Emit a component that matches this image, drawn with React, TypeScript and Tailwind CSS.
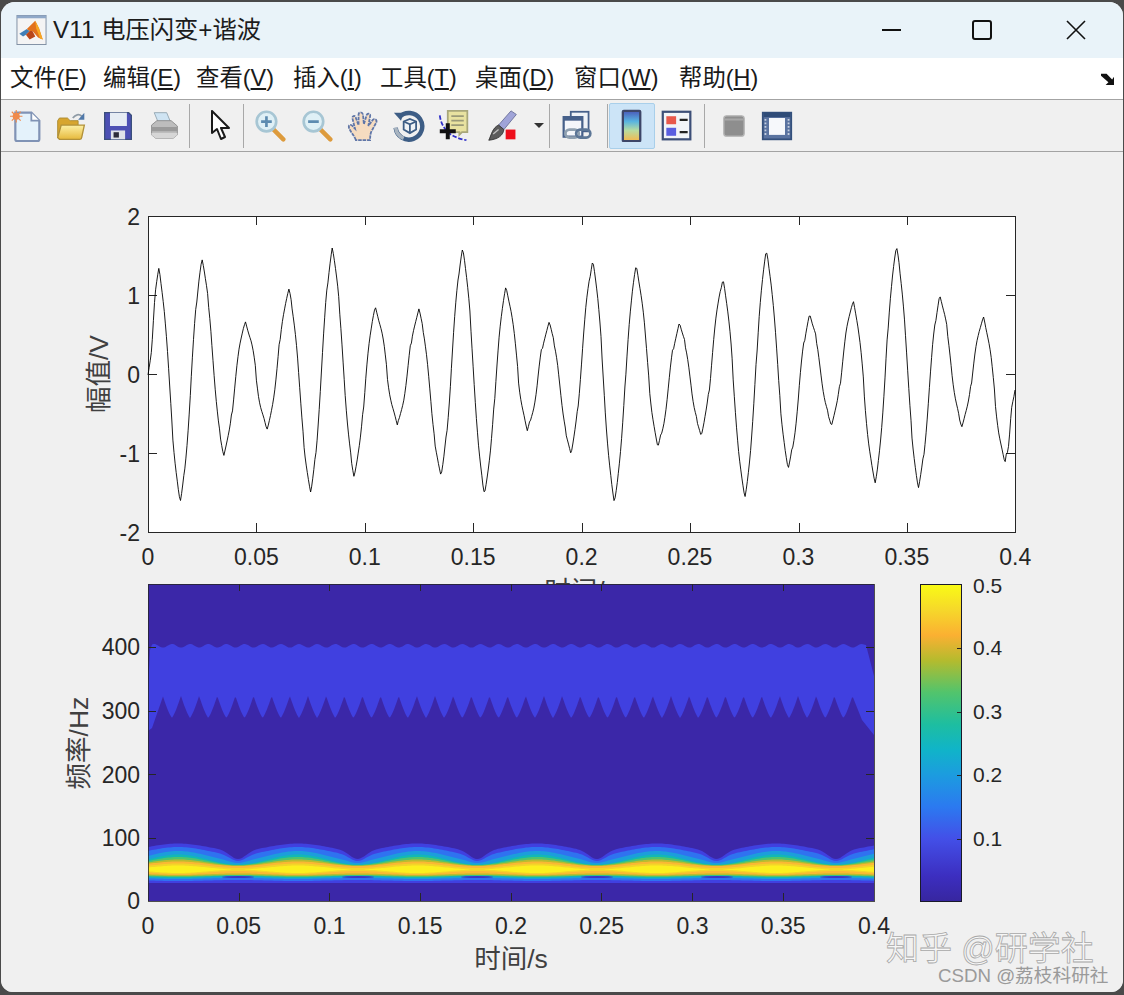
import React from 'react';

const SANS = { fontFamily: '"Liberation Sans", "Noto Sans CJK SC", sans-serif' };

// peaks and troughs of the top trace, page pixels
const EXTREMA: [number, number][] = [
  [148, 375], [158.7, 267.7], [180.3, 501.7], [202, 259], [223.7, 456], [245.3, 321], [267, 430],
  [289, 288.7], [310.7, 492.7], [332.3, 247.7], [354, 476.7], [375.3, 306.7], [397.3, 425],
  [419, 308.7], [441, 475.7], [462.6, 248.3], [484.4, 494], [505.9, 286.7], [527.3, 430.7],
  [549.2, 321.7], [571, 454], [592.8, 260.7], [614.3, 502], [636.1, 265.7], [657.9, 447.3],
  [679.4, 322.7], [701.2, 436], [723, 279.3], [744.9, 497.7], [766.3, 250.7], [788.2, 468.7],
  [809.6, 314], [831.4, 426], [853.3, 300.7], [875.1, 483.3], [896.5, 246.7], [918.4, 488.3],
  [939.8, 295.3], [961.7, 427.3], [983.5, 316.7], [1005, 463.3], [1015, 390],
];

const tracePoints = () => {
  const pts: string[] = [];
  let seg = 0;
  for (let i = 0; i <= 800; i++) {
    const x = 148 + (i * 867) / 800;
    while (seg < EXTREMA.length - 2 && x > EXTREMA[seg + 1][0]) seg++;
    const [x0, y0] = EXTREMA[seg];
    const [x1, y1] = EXTREMA[seg + 1];
    const s = Math.min(1, (x - x0) / (x1 - x0));
    const ease = 0.3 * s + (0.7 * (1 - Math.cos(Math.PI * s))) / 2;
    const base = y0 + (y1 - y0) * ease;
    const ripple = 3 * Math.sin(4 * Math.PI * s) * (y1 > y0 ? 1 : -1);
    const noise = (((i * 7919) % 11) - 5) * 0.55 * Math.sin(Math.PI * s);
    pts.push(`${x.toFixed(1)},${(base + ripple + noise).toFixed(1)}`);
  }
  return pts.join(' ');
};

// the bright 50 Hz band repeats between these notches
const notchDist = (x: number) => {
  const k = Math.round((x - 238) / 119.6);
  return Math.abs(x - (238 + k * 119.6));
};

// colour, top at bump, top at notch, bottom at bump, bottom at notch, notch sharpness
const LEVELS: [string, number, number, number, number, number][] = [
  ['#4040e0', 843.5, 859, 883, 883, 0.55],
  ['#2f72f0', 847, 861, 881, 880, 0.45],
  ['#1c9edb', 851, 863, 879, 878, 0.2],
  ['#12b8b4', 854.5, 864.5, 878, 876.5, 0],
  ['#4fc46e', 857, 865, 877, 875.5, 0],
  ['#b9bc2e', 859.5, 865.5, 876, 875, 0],
  ['#fab834', 861.5, 866, 875, 873.5, 0],
  ['#f4d428', 863.5, 868, 874, 871, 0],
  ['#fbf01e', 865.5, 869.5, 873, 869.5, 0],
];

const bandPoints = (t0: number, t1: number, b0: number, b1: number, sharpness: number) => {
  const top: string[] = [];
  const bottom: string[] = [];
  for (let x = 148; x <= 874; x += 2) {
    const d = notchDist(x);
    const g = Math.sin((Math.PI / 2) * Math.min(1, d / 60));
    const sharp = 1 - Math.exp(-((d / 11) ** 2));
    const h = sharpness * sharp + (1 - sharpness) * g * g;
    top.push(`${x},${(t1 + (t0 - t1) * h).toFixed(1)}`);
    bottom.unshift(`${x},${(b1 + (b0 - b1) * g * g).toFixed(1)}`);
  }
  return [...top, ...bottom].join(' ');
};

// lighter 300-400 Hz band with its scalloped top and toothed bottom
const purpleBand = () => {
  const top: string[] = [];
  const bottom: string[] = [];
  for (let x = 152; x <= 864; x += 1.5) {
    top.push(`${x},${(645.8 - 1.8 * Math.cos(((x - 172) / 18.15) * 2 * Math.PI)).toFixed(1)}`);
  }
  for (let x = 853; x >= 163; x -= 1) {
    const f = (((x - 162.8) / 18.15) % 1 + 1) % 1;
    const tri = 1 - Math.abs(f - 0.5) * 2;
    const y = 696 + 22 * (0.6 * tri + 0.4 * Math.sin(Math.PI * f));
    bottom.push(`${x},${y.toFixed(1)}`);
  }
  return ['148,731', '148,690', '150,650', ...top, '866,645', '874,676', '874,735', '862,720', ...bottom, '152,728'].join(' ');
};

const XT1 = ['0', '0.05', '0.1', '0.15', '0.2', '0.25', '0.3', '0.35', '0.4'];
const YT1: [string, number][] = [['2', 216], ['1', 295], ['0', 374], ['-1', 453], ['-2', 532]];
const YT2: [string, number][] = [['400', 647], ['300', 711], ['200', 774.5], ['100', 838], ['0', 901]];
const CBT: [string, number][] = [['0.5', 586], ['0.4', 648], ['0.3', 712], ['0.2', 775], ['0.1', 839]];

const Figure = () => {
  const axisText = 'fill-[#262626] text-[23px]';
  const labelText = 'fill-[#404040] text-[26.5px]';
  return (
    <svg viewBox="1 152 1122 840" width={1122} height={840} className="block bg-[#f0f0f0]" style={SANS}>
      <defs>
        <linearGradient id="parula" x1="0" y1="1" x2="0" y2="0">
          <stop offset="0" stopColor="#37269f" />
          <stop offset="0.08" stopColor="#3c2ec0" />
          <stop offset="0.2" stopColor="#4350e8" />
          <stop offset="0.3" stopColor="#2b7af0" />
          <stop offset="0.4" stopColor="#1c9cdf" />
          <stop offset="0.48" stopColor="#10b4c8" />
          <stop offset="0.56" stopColor="#1ebea0" />
          <stop offset="0.66" stopColor="#52c46c" />
          <stop offset="0.76" stopColor="#b4bb2e" />
          <stop offset="0.84" stopColor="#fbb032" />
          <stop offset="0.92" stopColor="#f6d82a" />
          <stop offset="1" stopColor="#f9fb15" />
        </linearGradient>
        <clipPath id="lowerClip">
          <rect x="148" y="584" width="726" height="317" />
        </clipPath>
      </defs>

      {/* top axes */}
      <rect x="148.5" y="216.5" width="867" height="316" fill="#fff" stroke="#262626" />
      {[256, 365, 473, 582, 690, 799, 907].map((x) => (
        <path key={x} d={`M${x + 0.5} 216V225M${x + 0.5} 532V523`} stroke="#262626" />
      ))}
      {[295, 374, 453].map((y) => (
        <path key={y} d={`M148 ${y + 0.5}H157M1015 ${y + 0.5}H1006`} stroke="#262626" />
      ))}
      <polyline points={tracePoints()} fill="none" stroke="#000" strokeWidth="0.9" />
      {XT1.map((t, i) => (
        <text key={t} x={148 + i * 108.4} y={565} textAnchor="middle" className={axisText}>{t}</text>
      ))}
      {YT1.map(([t, y]) => (
        <text key={t} x={140} y={y + 9} textAnchor="end" className={axisText}>{t}</text>
      ))}
      <text transform="translate(108 374) rotate(-90)" textAnchor="middle" className={labelText}>幅值/V</text>
      <text x={581} y={600} textAnchor="middle" className={labelText}>时间/s</text>

      {/* lower axes, contour levels painted from the outside in */}
      <rect x="148" y="584" width="726" height="317" fill="#3b27a8" />
      <g clipPath="url(#lowerClip)">
        <polygon points={purpleBand()} fill="#4040e0" />
        {LEVELS.map(([c, t0, t1, b0, b1, sharp]) => (
          <polygon key={c} points={bandPoints(t0, t1, b0, b1, sharp)} fill={c} />
        ))}
        {[238, 358, 477, 597, 717, 836].map((x) => (
          <ellipse key={x} cx={x} cy={877} rx={16} ry={1} fill="#3a34c8" />
        ))}
      </g>
      <rect x="148.5" y="584.5" width="726" height="317" fill="none" stroke="#262626" strokeOpacity="0.8" />
      {[239, 329, 420, 511, 601, 692, 783].map((x) => (
        <path key={x} d={`M${x + 0.5} 584V591M${x + 0.5} 901V893`} stroke="#262626" />
      ))}
      {[647, 711, 774, 838].map((y) => (
        <path key={y} d={`M148 ${y + 0.5}H156M874 ${y + 0.5}H866`} stroke="#262626" />
      ))}
      {XT1.map((t, i) => (
        <text key={t} x={148 + i * 90.75} y={934} textAnchor="middle" className={axisText}>{t}</text>
      ))}
      {YT2.map(([t, y]) => (
        <text key={t} x={140} y={y + 8} textAnchor="end" className={axisText}>{t}</text>
      ))}
      <text transform="translate(88 743) rotate(-90)" textAnchor="middle" className={labelText}>频率/Hz</text>
      <text x={511} y={968} textAnchor="middle" className={labelText}>时间/s</text>

      {/* colorbar */}
      <rect x="920.5" y="584.5" width="41" height="317" fill="url(#parula)" stroke="#1a1a2a" />
      {[648, 712, 775, 839].map((y) => (
        <path key={y} d={`M961 ${y + 0.5}H957`} stroke="#262626" />
      ))}
      {CBT.map(([t, y]) => (
        <text key={t} x={973} y={y + 7} className="fill-[#262626] text-[21px]">{t}</text>
      ))}

      {/* watermarks */}
      <text x={886} y={960} stroke="#a8a8a8" strokeWidth="0.8" fill="#f6f6f6" className="text-[33px]">知乎 @研学社</text>
      <text x={938} y={982} fill="#9a9a9a" className="text-[18.7px]">CSDN @荔枝科研社</text>
    </svg>
  );
};

const MatlabLogo = () => (
  <svg viewBox="0 0 32 32" width={31} height={30}>
    <rect x="0.5" y="0.5" width="31" height="31" fill="#f4f4f4" stroke="#7d8ca0" />
    <rect x="0.5" y="0.5" width="31" height="3" fill="#8fa8c8" />
    <path d="M3 20L11 15L14 17L10 21L7 23Z" fill="#3f7fb8" />
    <path d="M11 15L20 6L24 14L28 26L23 24L17 17L14 17Z" fill="#e2711d" />
    <path d="M20 6L24 14L28 26L25 25L21 14Z" fill="#f5a623" />
    <path d="M14 17L17 17L20 23L14 26L10 21Z" fill="#b8461a" />
  </svg>
);

const IconNew = () => (
  <svg viewBox="0 0 36 36" width={32} height={32}>
    <path d="M6 3H24L33 12V33A2 2 0 0 1 31 35H8A2 2 0 0 1 6 33Z" fill="#e4f2fb" stroke="#8093b5" strokeWidth="2.5" />
    <path d="M24 3V12H33" fill="#fff" stroke="#8093b5" strokeWidth="2" />
    <circle cx="7" cy="7" r="4" fill="#f08a4b" />
    <path d="M7 0V14M0 7H14M2 2L12 12M12 2L2 12" stroke="#f08a4b" strokeWidth="1.3" />
  </svg>
);

const IconOpen = () => (
  <svg viewBox="0 0 36 36" width={32} height={32}>
    <defs>
      <linearGradient id="folder" x1="0" y1="0" x2="0" y2="1">
        <stop offset="0" stopColor="#fdf0a4" />
        <stop offset="1" stopColor="#e6b93c" />
      </linearGradient>
    </defs>
    <path d="M3 12L5 9H14L17 12H26V32H6A3 3 0 0 1 3 29Z" fill="#d7a52f" stroke="#a9882d" />
    <path d="M3 31L7 17H33L30 31A2 2 0 0 1 28 33H5Z" fill="url(#folder)" stroke="#b1913a" strokeWidth="1.5" />
    <path d="M20 9C23 5 27 4 30 7" fill="none" stroke="#8f9ba6" strokeWidth="2" />
    <path d="M33 3V11H26Z" fill="#5078a8" />
  </svg>
);

const IconSave = () => (
  <svg viewBox="0 0 36 36" width={32} height={32}>
    <path d="M3 3H30L33 6V33H3Z" fill="#4c50b4" stroke="#3b4f7c" strokeWidth="1.5" />
    <rect x="9" y="3" width="19" height="15" fill="#e6ecf4" />
    <rect x="10" y="23" width="16" height="10" fill="#dfe3ea" />
    <rect x="13" y="25" width="6" height="6" fill="#2c2c3a" />
  </svg>
);

const IconPrint = () => (
  <svg viewBox="0 0 36 36" width={32} height={32}>
    <path d="M7 3H21L26 15H12Z" fill="#cfe4f3" stroke="#90a4b0" />
    <path d="M4 17L10 12H26L33 18V28L28 32H9L4 28Z" fill="#bdbdbd" stroke="#8a8a8a" />
    <path d="M4 19H33V24H4Z" fill="#9a9a9a" />
    <path d="M4 26H33V28L28 32H9L4 28Z" fill="#d6d6d6" />
  </svg>
);

const IconArrow = () => (
  <svg viewBox="0 0 22 32" width={22} height={32}>
    <path d="M2 1L2 23L7 19L11 29L15 27L11 18L19 18Z" fill="#fff" stroke="#1a1a1a" strokeWidth="2" strokeLinejoin="round" />
  </svg>
);

const IconZoom = ({ plus }: { plus: boolean }) => (
  <svg viewBox="0 0 36 36" width={32} height={32}>
    <path d="M21 21L33 33" stroke="#dd9b3d" strokeWidth="5" strokeLinecap="round" />
    <circle cx="14" cy="13" r="11" fill="#dff0f6" stroke="#a7c6d4" strokeWidth="3" />
    <path d={plus ? 'M8 13H20M14 7V19' : 'M8 13H20'} stroke="#5d8bb0" strokeWidth="3" />
  </svg>
);

const IconHand = () => (
  <svg viewBox="0 0 36 36" width={32} height={32}>
    <path
      d="M10 34C8 28 3 24 2 19C2 16 5 16 7 19L9 21L6 9C6 6 10 6 10 9L13 17L13 5C13 2 17 2 18 5L19 16L22 6C23 3 27 4 26 7L24 18L29 11C31 9 34 11 33 14L27 25C26 29 26 31 26 34Z"
      fill="#f6dcc0"
      stroke="#5f76a8"
      strokeWidth="2"
      strokeDasharray="4 1"
    />
  </svg>
);

const IconRotate = () => (
  <svg viewBox="0 0 36 36" width={32} height={32}>
    <path d="M7 8A15 15 0 1 1 3 20" fill="none" stroke="#3d5d85" strokeWidth="5" />
    <path d="M1 3L12 3L9 12Z" fill="#3d5d85" />
    <path d="M3 20A15 15 0 0 0 12 32" fill="none" stroke="#a8b4c0" strokeWidth="4" />
    <path d="M12 13L19 10L26 13V22L19 26L12 22Z" fill="#eef2f6" stroke="#3d5d85" strokeWidth="2" />
    <path d="M12 13L19 16L26 13M19 16V26" fill="none" stroke="#3d5d85" strokeWidth="2" />
  </svg>
);

const IconCursor = () => (
  <svg viewBox="0 0 36 36" width={32} height={32}>
    <path d="M11 1H33V25H27L24 28V25H11Z" fill="#e8e2a0" stroke="#a8a77a" strokeWidth="2" />
    <path d="M15 7H29M15 12H29M15 17H29" stroke="#9a9a78" strokeWidth="2" />
    <path d="M2 6C3 14 6 19 10 24C15 29 22 32 32 34" fill="none" stroke="#3030c8" strokeWidth="2" strokeDasharray="5 2" />
    <path d="M11 15V33M2 24H20" stroke="#111" strokeWidth="4.5" />
  </svg>
);

const IconBrush = () => (
  <svg viewBox="0 0 36 36" width={32} height={32}>
    <path d="M27 1L33 5L19 22L13 17Z" fill="#a0a4d8" stroke="#6a7098" />
    <path d="M13 17L19 22C18 29 12 33 2 34C5 28 6 20 13 17Z" fill="#5c5c5c" stroke="#333" />
    <path d="M7 27L13 22" stroke="#c0c0c0" strokeWidth="1.5" />
    <rect x="21" y="22" width="11" height="11" fill="#ee0f1c" />
  </svg>
);

const IconLink = () => (
  <svg viewBox="0 0 36 36" width={32} height={32}>
    <rect x="11" y="2" width="20" height="22" fill="#eef2f7" stroke="#46608a" strokeWidth="2" />
    <rect x="3" y="8" width="21" height="22" fill="#f4f6fa" stroke="#46608a" strokeWidth="2.5" />
    <rect x="3" y="8" width="21" height="4" fill="#46608a" />
    <rect x="5" y="22" width="15" height="9" rx="4.5" fill="none" stroke="#8fa0b0" strokeWidth="3" />
    <rect x="17" y="22" width="16" height="9" rx="4.5" fill="none" stroke="#5c7696" strokeWidth="3" />
  </svg>
);

const IconColorbar = () => (
  <svg viewBox="0 0 24 36" width={22} height={33}>
    <defs>
      <linearGradient id="cbIcon" x1="0" y1="0" x2="0" y2="1">
        <stop offset="0" stopColor="#4a58b8" />
        <stop offset="0.35" stopColor="#58b4e0" />
        <stop offset="0.65" stopColor="#b8dca0" />
        <stop offset="1" stopColor="#f6b84c" />
      </linearGradient>
    </defs>
    <rect x="2" y="2" width="19" height="33" rx="1" fill="url(#cbIcon)" stroke="#3d4668" strokeWidth="2.5" />
  </svg>
);

const IconLegend = () => (
  <svg viewBox="0 0 36 36" width={32} height={32}>
    <rect x="2" y="2" width="31" height="31" fill="#f2f4f8" stroke="#3d4f78" strokeWidth="2.5" />
    <rect x="6" y="7" width="11" height="9" fill="#e8584c" />
    <rect x="6" y="20" width="11" height="9" fill="#5a5ee0" />
    <path d="M21 11H30M21 25H30" stroke="#222" strokeWidth="2.5" />
  </svg>
);

const IconGrey = () => (
  <svg viewBox="0 0 26 26" width={24} height={24}>
    <rect x="2" y="2" width="22" height="22" rx="3" fill="#8e8e8e" stroke="#b4b4b4" strokeWidth="1.5" />
    <path d="M3 6H23" stroke="#a8a8a8" strokeWidth="2" />
  </svg>
);

const IconFrame = () => (
  <svg viewBox="0 0 36 36" width={32} height={32}>
    <rect x="2" y="3" width="32" height="30" fill="#5a73a0" stroke="#34507c" strokeWidth="2" />
    <rect x="3" y="3" width="30" height="5" fill="#2f4c78" />
    <rect x="9" y="9" width="18" height="19" fill="#f6f8fb" />
    <path d="M5 10V28M31 10V28" stroke="#c5cfdf" strokeWidth="2" strokeDasharray="2 2" />
  </svg>
);

const Sep = ({ className }: { className: string }) => <div className={`w-px h-[44px] bg-[#a8a8a8] ${className}`} />;

const Toolbar = () => (
  <div className="flex items-center h-[53px] pl-[9px] bg-[#f0f0f0] border-y border-[#a3a3a3]">
    <IconNew />
    <div className="ml-[13px] flex"><IconOpen /></div>
    <div className="ml-[15px] flex"><IconSave /></div>
    <div className="ml-[14px] flex"><IconPrint /></div>
    <Sep className="ml-[9px]" />
    <div className="ml-[20px] flex"><IconArrow /></div>
    <Sep className="ml-[11px]" />
    <div className="ml-[10px] flex"><IconZoom plus /></div>
    <div className="ml-[15px] flex"><IconZoom plus={false} /></div>
    <div className="ml-[14px] flex"><IconHand /></div>
    <div className="ml-[14px] flex"><IconRotate /></div>
    <div className="ml-[13px] flex"><IconCursor /></div>
    <div className="ml-[17px] flex"><IconBrush /></div>
    <div className="ml-[15px] w-0 h-0 border-x-[5px] border-x-transparent border-t-[5px] border-t-[#333]" />
    <Sep className="ml-[5px]" />
    <div className="ml-[11px] flex"><IconLink /></div>
    <Sep className="ml-[14px]" />
    <div className="ml-px w-[46px] h-[46px] flex items-center justify-center bg-[#cce4f7] border border-[#a9cfea] rounded-[2px]"><IconColorbar /></div>
    <div className="ml-[6px] flex"><IconLegend /></div>
    <Sep className="ml-[11px]" />
    <div className="ml-[17px] flex"><IconGrey /></div>
    <div className="ml-[15px] flex"><IconFrame /></div>
  </div>
);

const MENU: [string, string, number][] = [
  ['文件', 'F', 93],
  ['编辑', 'E', 93],
  ['查看', 'V', 97],
  ['插入', 'I', 87],
  ['工具', 'T', 95],
  ['桌面', 'D', 99],
  ['窗口', 'W', 105],
  ['帮助', 'H', 90],
];

const MenuBar = () => (
  <div className="flex items-center justify-between h-[41px] pl-[9px] pr-[8px] bg-white text-[23.4px] text-[#1a1a1a]" style={SANS}>
    <div className="flex">
      {MENU.map(([label, key, w]) => (
        <div key={key} style={{ width: w }} className="whitespace-nowrap leading-none">
          {label}(<span className="underline underline-offset-2">{key}</span>)
        </div>
      ))}
    </div>
    <svg viewBox="0 0 16 14" width={15} height={13}>
      <path d="M1 2H7L13 8L15 5V14H6L9 11L1 4Z" fill="#111" />
    </svg>
  </div>
);

const TitleBar = () => (
  <div className="flex items-center justify-between h-[56px] pl-[15px] pr-[37px] bg-[#e9f3f9]" style={SANS}>
    <div className="flex items-center gap-[6px]">
      <MatlabLogo />
      <span className="text-[24.3px] text-[#1c1c1c] leading-none">V11 电压闪变+谐波</span>
    </div>
    <div className="flex items-center">
      <div className="w-[19px] h-[2px] bg-[#111]" />
      <div className="ml-[71px] w-[20px] h-[20px] border-2 border-[#111] rounded-[3px]" />
      <svg viewBox="0 0 20 20" width={20} height={20} className="ml-[74px]">
        <path d="M1 1L19 19M19 1L1 19" stroke="#111" strokeWidth="1.6" />
      </svg>
    </div>
  </div>
);

export default function App() {
  return (
    <div className="w-[1124px] h-[995px] overflow-hidden bg-[#4a4a4a] pt-[2px] px-px">
      <div className="w-[1122px] h-[990px] overflow-hidden rounded-t-[14px] rounded-b-[12px] bg-[#f0f0f0]">
        <TitleBar />
        <MenuBar />
        <Toolbar />
        <Figure />
      </div>
    </div>
  );
}
